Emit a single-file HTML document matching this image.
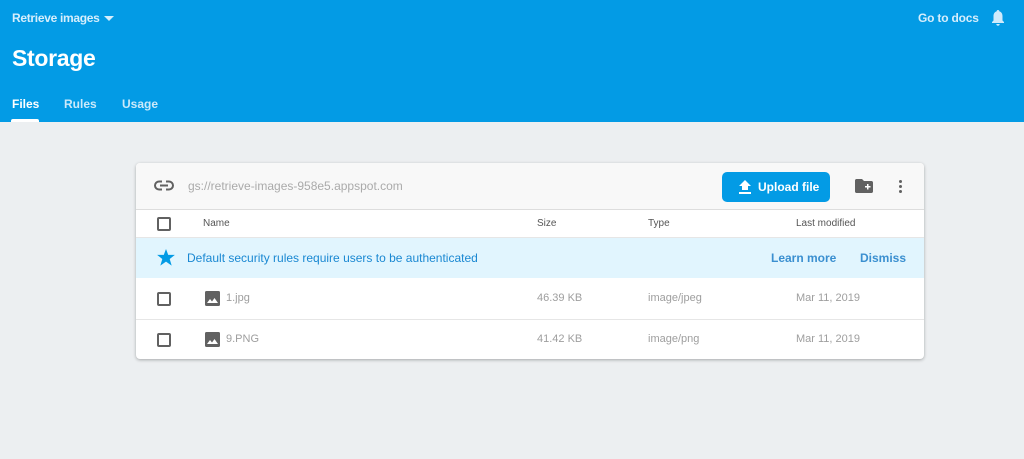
<!DOCTYPE html>
<html><head><style>
body{margin:0;width:1024px;height:459px;background:#eceff1;font-family:"Liberation Sans",sans-serif;position:relative;overflow:hidden}
.hdr{position:absolute;left:0;top:0;width:1024px;height:122px;background:#039be5;color:#fff}
.a{position:absolute;white-space:nowrap}
.card{position:absolute;left:136px;top:163px;width:788px;height:196px;background:#fff;border-radius:4px;box-shadow:0 1px 3px rgba(0,0,0,.3);overflow:hidden}
.tb{position:absolute;left:0;top:0;width:788px;height:46px;background:#f8f8f8;border-bottom:1px solid #ddd}
.cb{position:absolute;width:10px;height:10px;border:2px solid #616161;border-radius:2px}
.row{position:absolute;left:0;width:788px;border-bottom:1px solid #e6e6e6}
.g{color:#9e9e9e;font-size:11px}
.h{color:#555;font-size:10px}
</style></head><body>
<div class="hdr">
<div class="a" style="left:12px;top:11px;font-size:12px;font-weight:bold;color:#d6eefc;letter-spacing:-0.3px">Retrieve images</div>
<div class="a" style="left:104px;top:16px;width:0;height:0;border-left:5px solid transparent;border-right:5px solid transparent;border-top:5px solid #d6eefc"></div>
<div class="a" style="left:12px;top:45px;font-size:23px;font-weight:bold;letter-spacing:-0.3px">Storage</div>
<div class="a" style="left:12px;top:97px;font-size:12px;font-weight:bold">Files</div>
<div class="a" style="left:11px;top:119px;width:28px;height:3px;background:#fff;border-radius:2px 2px 0 0"></div>
<div class="a" style="left:64px;top:97px;font-size:12px;font-weight:bold;color:#cbe9fa">Rules</div>
<div class="a" style="left:122px;top:97px;font-size:12px;font-weight:bold;color:#cbe9fa">Usage</div>
<div class="a" style="left:918px;top:11px;font-size:12px;font-weight:bold;color:#d6eefc;letter-spacing:-0.2px">Go to docs</div>
<svg class="a" style="left:990px;top:9px" width="16" height="18" viewBox="0 0 16 18"><path d="M8 1c1 0 1.3.7 1.3 1.3C11.5 3 12.5 5 12.5 7v4.5L14 13v1H2v-1l1.5-1.5V7c0-2 1-4 3.2-4.7C6.7 1.7 7 1 8 1zM6.3 15h3.4c0 1-.8 1.8-1.7 1.8S6.3 16 6.3 15z" fill="#cfeafb"/></svg>
</div>
<div class="card">
<div class="tb">
<svg class="a" style="left:18px;top:17px" width="20" height="11" viewBox="0 0 20 11"><path d="M8 1.5H5a4 4 0 0 0 0 8h3M12 1.5h3a4 4 0 0 1 0 8h-3M6 5.5h8" stroke="#616161" stroke-width="2" fill="none"/></svg>
<div class="a" style="left:52px;top:16px;font-size:12px;color:#aaa">gs://retrieve-images-958e5.appspot.com</div>
<div class="a" style="left:586px;top:9px;width:108px;height:30px;background:#039be5;border-radius:5px"></div>
<svg class="a" style="left:602px;top:17px" width="14" height="15" viewBox="0 0 14 15"><path d="M4 10V6H1l6-6 6 6h-3v4zM1 12h12v2H1z" fill="#fff"/></svg>
<div class="a" style="left:622px;top:17px;font-size:12px;font-weight:bold;color:#fff">Upload file</div>
<svg class="a" style="left:719px;top:16px" width="18" height="14" viewBox="0 0 18 14"><path d="M0 1.5C0 .7.7 0 1.5 0H7l2 2h7.5c.8 0 1.5.7 1.5 1.5v9c0 .8-.7 1.5-1.5 1.5h-15C.7 14 0 13.3 0 12.5z" fill="#616161"/><path d="M12 5v2h-2v1.5h2v2h1.5v-2h2V7h-2V5z" fill="#fff"/></svg>
<div class="a" style="left:763px;top:17px;width:3px;height:3px;background:#616161;border-radius:50%;box-shadow:0 5px 0 #616161,0 10px 0 #616161"></div>
</div>
<div class="row" style="top:47px;height:27px">
<div class="cb" style="left:21px;top:7px"></div>
<div class="a h" style="left:67px;top:8px">Name</div>
<div class="a h" style="left:401px;top:8px">Size</div>
<div class="a h" style="left:512px;top:8px">Type</div>
<div class="a h" style="left:660px;top:8px">Last modified</div>
</div>
<div class="row" style="top:75px;height:40px;background:#e1f5fe;border:none">
<svg class="a" style="left:21px;top:11px" width="18" height="17" viewBox="0 0 24 23"><path d="M12 0l3 8h9l-7 5.5 2.7 9L12 17l-7.7 5.5 2.7-9L0 8h9z" fill="#039be5"/></svg>
<div class="a" style="left:51px;top:13px;font-size:12px;color:#1a88d2">Default security rules require users to be authenticated</div>
<div class="a" style="left:635px;top:13px;font-size:12px;font-weight:bold;color:#3a8fd0">Learn more</div>
<div class="a" style="left:724px;top:13px;font-size:12px;font-weight:bold;color:#3a8fd0">Dismiss</div>
</div>
<div class="row" style="top:115px;height:41px">
<div class="cb" style="left:21px;top:14px"></div>
<svg class="a" style="left:69px;top:13px" width="15" height="15" viewBox="0 0 15 15"><rect width="15" height="15" rx="1.5" fill="#616161"/><path d="M2 12l3-4 2 2.5 2.5-3.5 3.5 5z" fill="#fff"/></svg>
<div class="a g" style="left:90px;top:14px">1.jpg</div>
<div class="a g" style="left:401px;top:14px">46.39 KB</div>
<div class="a g" style="left:512px;top:14px">image/jpeg</div>
<div class="a g" style="left:660px;top:14px">Mar 11, 2019</div>
</div>
<div class="row" style="top:156px;height:40px;border:none">
<div class="cb" style="left:21px;top:14px"></div>
<svg class="a" style="left:69px;top:13px" width="15" height="15" viewBox="0 0 15 15"><rect width="15" height="15" rx="1.5" fill="#616161"/><path d="M2 12l3-4 2 2.5 2.5-3.5 3.5 5z" fill="#fff"/></svg>
<div class="a g" style="left:90px;top:14px">9.PNG</div>
<div class="a g" style="left:401px;top:14px">41.42 KB</div>
<div class="a g" style="left:512px;top:14px">image/png</div>
<div class="a g" style="left:660px;top:14px">Mar 11, 2019</div>
</div>
</div>
</body></html>
